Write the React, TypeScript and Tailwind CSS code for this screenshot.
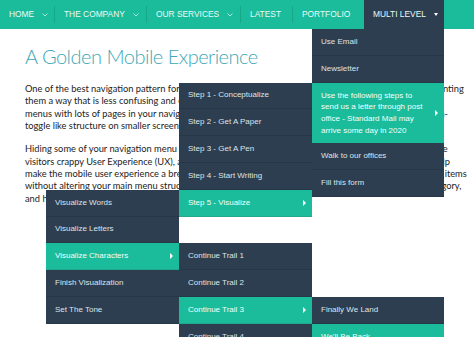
import type { ReactNode } from "react";

const navItems = [
  { label: "HOME", width: "w-[55px]", chevron: true },
  { label: "THE COMPANY", width: "w-[92px]", chevron: true },
  { label: "OUR SERVICES", width: "w-[94px]", chevron: true },
  { label: "LATEST", width: "w-[52px]", chevron: false },
  { label: "PORTFOLIO", width: "w-[71px]", chevron: false, last: true },
];

const firstParagraph = [
  "One of the best navigation pattern for mobile devices is to give your users a way better option by presenting",
  "them a way that is less confusing and easier to use, especially when it comes to dropdown",
  "menus with lots of pages in your navigation bar, it is usually better to convert them all into a clean mega-",
  "toggle like structure on smaller screens.",
];

const secondParagraph = [
  "Hiding some of your navigation menu items on small screens is not a solution as it'll give all your website",
  "visitors crappy User Experience (UX), and that is precisely the reason why we have finally decided to help",
  "make the mobile user experience a breeze with a responsive dropdown menu that shows all your menu items",
  "without altering your main menu structure, neatly grouped under their own parent menu item and category,",
  "and help your users navigate easily.",
];

function Chevron() {
  return (
    <svg width="6" height="4" viewBox="0 0 6 4" className="ml-[8px] text-white/70">
      <polyline points="0.5,0.5 3,3 5.5,0.5" fill="none" stroke="currentColor" strokeWidth="0.9" />
    </svg>
  );
}

function RightCaret() {
  return <span className="ml-auto h-0 w-0 border-y-[3px] border-l-[3px] border-y-transparent border-l-white" />;
}

function MenuItem({
  label,
  active,
  children,
}: {
  label: ReactNode;
  active?: boolean;
  children?: ReactNode;
}) {
  return (
    <li
      className={
        active
          ? "relative flex min-h-[26.8px] items-center border-b border-[#21a98d] bg-[#1abc9c] pl-[9px] pr-[6px] text-[#f2fffb]"
          : "relative flex min-h-[26.8px] items-center border-b border-[#263748] pl-[9px] pr-[6px] text-[#dfe4e8]"
      }
    >
      <span>{label}</span>
      {active && <RightCaret />}
      {children}
    </li>
  );
}

function Menu({ className, children }: { className: string; children: ReactNode }) {
  return (
    <ul className={`absolute z-10 bg-[#2c3e50] font-['Liberation_Sans',Arial,sans-serif] text-[8px] leading-[10px] ${className}`}>
      {children}
    </ul>
  );
}

export default function App() {
  return (
    <div className="relative h-[337px] w-[474px] overflow-hidden bg-white">
      <nav className="flex h-[29px] bg-[#1abc9c] font-['Liberation_Sans',Arial,sans-serif] text-[8.4px] text-[#eafaf5]">
        {navItems.map((item) => (
          <div key={item.label} className={`flex h-full items-center pl-[9px] ${item.width}`}>
            <span>{item.label}</span>
            {item.chevron && <Chevron />}
            {!item.last && <span className="ml-auto h-[17px] w-px bg-[#17a88a]" />}
          </div>
        ))}
        <div className="relative flex h-full w-[80px] items-center bg-[#2c3e50] pl-[9px]">
          <span>MULTI LEVEL</span>
          <span className="ml-auto mr-[6px] h-0 w-0 border-x-[2.5px] border-t-[3px] border-x-transparent border-t-white" />
          <Menu className="right-0 top-full w-[132px]">
            <MenuItem label="Use Email" />
            <MenuItem label="Newsletter" />
            <li className="relative flex items-center bg-[#1abc9c] py-[7px] pl-[9px] pr-[6px] leading-[11.7px] text-[#f2fffb]">
              <span>
                <span className="block">Use the following steps to</span>
                <span className="block">send us a letter through post</span>
                <span className="block">office - Standard Mail may</span>
                <span className="block">arrive some day in 2020</span>
              </span>
              <RightCaret />
              <Menu className="right-full top-0 w-[133px]">
                <MenuItem label="Step 1 - Conceptualize" />
                <MenuItem label="Step 2 - Get A Paper" />
                <MenuItem label="Step 3 - Get A Pen" />
                <MenuItem label="Step 4 - Start Writing" />
                <MenuItem label="Step 5 - Visualize" active>
                  <Menu className="right-full top-0 w-[133px]">
                    <MenuItem label="Visualize Words" />
                    <MenuItem label="Visualize Letters" />
                    <MenuItem label="Visualize Characters" active>
                      <Menu className="left-full top-0 w-[133px]">
                        <MenuItem label="Continue Trail 1" />
                        <MenuItem label="Continue Trail 2" />
                        <MenuItem label="Continue Trail 3" active>
                          <Menu className="left-full top-0 w-[132px]">
                            <MenuItem label="Finally We Land" />
                            <li className="flex min-h-[26.8px] items-center bg-[#1abc9c] pl-[9px] text-[#f2fffb]">
                              We'll Be Back
                            </li>
                          </Menu>
                        </MenuItem>
                        <MenuItem label="Continue Trail 4" />
                      </Menu>
                    </MenuItem>
                    <MenuItem label="Finish Visualization" />
                    <MenuItem label="Set The Tone" />
                  </Menu>
                </MenuItem>
              </Menu>
            </li>
            <MenuItem label="Walk to our offices" />
            <MenuItem label="Fill this form" />
          </Menu>
        </div>
      </nav>

      <main className="px-[25px] font-['Lato','Open_Sans',sans-serif]">
        <h1 className="mt-[14px] text-[20px] font-light leading-[26px] tracking-[-0.5px] text-[#3fa8b6]">
          A Golden Mobile Experience
        </h1>
        <p className="mt-[14px] whitespace-nowrap text-[9.3px] leading-[12.4px] text-[#222]">
          {firstParagraph.map((line) => (
            <span key={line} className="block">
              {line}
            </span>
          ))}
        </p>
        <p className="mt-[10.5px] whitespace-nowrap text-[9.3px] leading-[12.4px] text-[#222]">
          {secondParagraph.map((line) => (
            <span key={line} className="block">
              {line}
            </span>
          ))}
        </p>
      </main>
    </div>
  );
}
